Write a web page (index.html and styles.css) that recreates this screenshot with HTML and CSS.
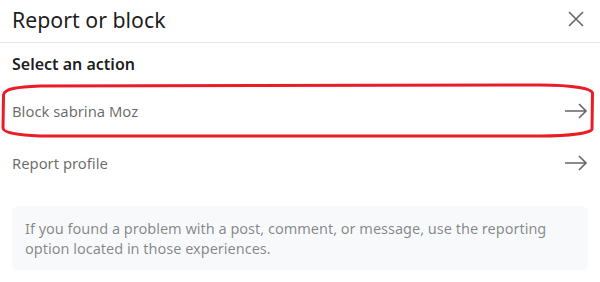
FILE: index.html
```html
<!DOCTYPE html>
<html lang="en">
<head>
<meta charset="utf-8">
<title>Report or block</title>
<link rel="stylesheet" href="styles.css">
</head>
<body>
<div class="dialog">
  <header class="dialog-header">
    <h2 class="dialog-title">Report or block</h2>
    <button class="close-btn" aria-label="Dismiss">
      <svg viewBox="0 0 24 24" width="24" height="24"><path d="M5 5l14 14M19 5L5 19" /></svg>
    </button>
  </header>
  <div class="dialog-body">
    <h3 class="section-title">Select an action</h3>
    <ul class="actions">
      <li class="action action-highlight">
        <span class="action-label">Block sabrina Moz</span>
        <svg class="arrow" viewBox="0 0 24 24" width="24" height="24"><path d="M1 12h21M15 5l7 7-7 7" /></svg>
        <svg class="annotation" viewBox="0 0 600 60" width="600" height="60" preserveAspectRatio="none">
          <path d="M40 3 C 20 4, 4 5, 3.5 12 L 3 45 C 3 50, 20 52, 40 53 L 540 53 C 570 53, 592 50, 592 46 L 592.5 10 C 592 6, 575 2, 540 2 Z" />
        </svg>
      </li>
      <li class="action">
        <span class="action-label">Report profile</span>
        <svg class="arrow" viewBox="0 0 24 24" width="24" height="24"><path d="M1 12h21M15 5l7 7-7 7" /></svg>
      </li>
    </ul>
    <p class="info">If you found a problem with a post, comment, or message, use the reporting option located in those experiences.</p>
  </div>
</div>
</body>
</html>
```
FILE: styles.css
```css
* { box-sizing: border-box; }
html, body { margin: 0; padding: 0; background: #fff; }
body {
  font-family: "Noto Sans", "Open Sans", sans-serif;
  color: rgba(0,0,0,0.9);
  width: 600px;
}
.dialog { width: 600px; }
.dialog-header {
  height: 43px;
  display: flex;
  align-items: center;
  justify-content: space-between;
  padding: 0 12px;
  border-bottom: 1px solid #e8e8e8;
}
.dialog-title {
  margin: 0;
  font-size: 21.3px;
  font-weight: 400;
  line-height: 28px;
  color: rgba(0,0,0,0.9);
  margin-top: -2px;
}
.close-btn {
  border: 0;
  background: none;
  padding: 0;
  width: 24px;
  height: 24px;
  display: flex;
  margin-top: -4px;
}
.close-btn svg path {
  stroke: #666;
  stroke-width: 1.6;
  fill: none;
}
.dialog-body { padding: 0 12px; }
.section-title {
  margin: 9px 0 0;
  font-size: 16px;
  font-weight: 600;
  line-height: 24px;
  color: rgba(0,0,0,0.9);
}
.actions {
  list-style: none;
  margin: 9px 0 0;
  padding: 0;
}
.action {
  position: relative;
  height: 52px;
  display: flex;
  align-items: center;
  justify-content: space-between;
}
.action-label {
  font-size: 14.8px;
  color: rgba(0,0,0,0.6);
}
.arrow path {
  stroke: #666;
  stroke-width: 1.6;
  fill: none;
}
.annotation {
  position: absolute;
  left: -12px;
  top: -2px;
  pointer-events: none;
}
.annotation path {
  fill: none;
  stroke: #ea1c26;
  stroke-width: 3;
}
.info {
  margin: 17px 0 0;
  background: #f8f9fb;
  border-radius: 6px;
  padding: 12px 13px;
  font-size: 14.5px;
  line-height: 20px;
  color: rgba(0,0,0,0.48);
}
```
